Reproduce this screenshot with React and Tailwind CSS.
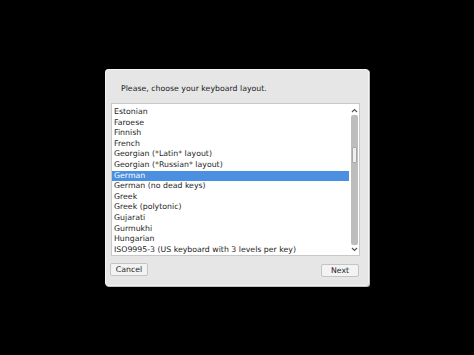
import React from "react";

const layouts = [
  "Estonian",
  "Faroese",
  "Finnish",
  "French",
  "Georgian (*Latin* layout)",
  "Georgian (*Russian* layout)",
  "German",
  "German (no dead keys)",
  "Greek",
  "Greek (polytonic)",
  "Gujarati",
  "Gurmukhi",
  "Hungarian",
  "ISO9995-3 (US keyboard with 3 levels per key)",
];

export default function App() {
  const selected = "German";
  return (
    <div
      className="w-[474px] h-[355px] bg-black pt-[69px] pl-[105px] overflow-hidden"
      style={{ fontFamily: '"DejaVu Sans", sans-serif' }}
    >
      <div className="w-[264px] h-[217px] bg-[#e6e6e6] border border-[#f4f4f4] rounded-[3px] flex flex-col shadow-[1px_1px_0_#bdbdbd]">
        {/* title */}
        <div className="h-[33px] pl-[15px] pt-[14px] text-[7.8px] leading-[10px] text-[#222]">
          Please, choose your keyboard layout.
        </div>

        {/* list */}
        <div className="ml-[5px] mr-[8px] h-[153px] bg-white border border-[#c9c9c9] flex">
          <div className="flex-1 pt-[3px] overflow-hidden">
            {layouts.map((l) => (
              <div
                key={l}
                className={
                  "h-[10.6px] pl-[2px] text-[7.8px] leading-[10.6px] whitespace-nowrap " +
                  (l === selected
                    ? "bg-[#4a8fe0] text-white"
                    : "text-[#1e1e1e]")
                }
              >
                {l}
              </div>
            ))}
          </div>
          <div className="w-[10px] flex flex-col items-center bg-white pt-[4px] pb-[3px]">
            <svg width="7" height="5" viewBox="0 0 7 5">
              <path d="M1 4 L3.5 1.5 L6 4" fill="none" stroke="#555" strokeWidth="1.2" />
            </svg>
            <div className="w-[7px] flex-1 my-[2px] bg-[#bdbdbd] rounded-[2px] flex flex-col pt-[32px]">
              <div className="h-[16px] mx-[1px] bg-[#efefef] border border-[#a8a8a8] rounded-[1px]" />
            </div>
            <svg width="7" height="5" viewBox="0 0 7 5">
              <path d="M1 1 L3.5 3.5 L6 1" fill="none" stroke="#555" strokeWidth="1.2" />
            </svg>
          </div>
        </div>

        {/* buttons */}
        <div className="flex justify-between pl-[4px] pr-[9px] mt-[7px]">
          <button className="w-[38px] h-[13px] bg-[#f3f3f3] border border-[#c4c4c4] rounded-[2px] text-[7.8px] leading-[11px] text-[#222]">
            Cancel
          </button>
          <button className="w-[38px] h-[13px] bg-[#f3f3f3] border border-[#c4c4c4] rounded-[2px] text-[7.8px] leading-[11px] text-[#222] mt-[1px]">
            Next
          </button>
        </div>
      </div>
    </div>
  );
}
